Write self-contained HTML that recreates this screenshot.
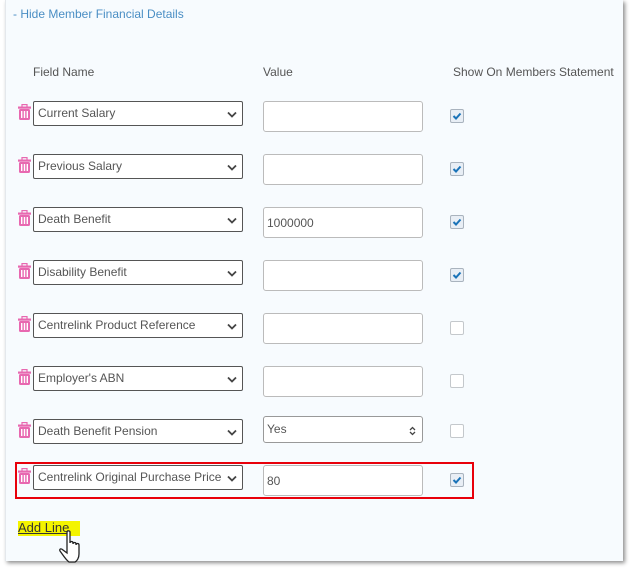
<!DOCTYPE html>
<html><head><style>
body{margin:0;width:631px;height:570px;background:#fff;font-family:"Liberation Sans",sans-serif;position:relative;overflow:hidden}
.panel{position:absolute;left:5px;top:0;width:617px;height:561px;background:#f7fbfe;box-shadow:2px 2px 4px rgba(0,0,0,.45);border-left:1px solid #e4e8ec}
.a{position:absolute}
.hide{left:13px;top:7px;font-size:12px;color:#4a8ec4}
.h{font-size:12px;color:#555;top:65px}
.sel{position:absolute;left:33px;height:23px;border:1px solid #555;border-radius:2px;background:#fff;font-size:12px;color:#555;line-height:23px;padding-left:4px;box-sizing:content-box;width:204px}
.sel svg{position:absolute;right:5px;top:9px}
.inp{position:absolute;left:263px;height:31px;border:1px solid #bbb;border-radius:3px;background:#fff;font-size:12px;color:#555;line-height:31px;padding-left:3px;box-sizing:border-box;width:160px}
.cb{position:absolute;left:450px;width:12px;height:12px;border:1px solid #c4c8cc;border-radius:2px;background:#fff}
.cb.on{background:#e8eef5;border-color:#a9b3be}
.tr{position:absolute;left:18px}
</style></head><body>
<div class="panel"></div>
<div class="a hide">- Hide Member Financial Details</div>
<div class="a h" style="left:33px">Field Name</div>
<div class="a h" style="left:263px">Value</div>
<div class="a h" style="left:453px">Show On Members Statement</div>

<svg width="0" height="0" style="position:absolute"><defs>
<symbol id="t" viewBox="0 0 13 16"><rect x="0" y="2.5" width="13" height="2.2" fill="#e868b0"/><rect x="4" y="0.6" width="5" height="2.5" fill="none" stroke="#e868b0" stroke-width="1.2"/><rect x="1" y="5" width="11" height="11" rx="1.5" fill="#e868b0"/><rect x="3" y="7" width="1.4" height="7" fill="#fff"/><rect x="5.8" y="7" width="1.4" height="7" fill="#fff"/><rect x="8.6" y="7" width="1.4" height="7" fill="#fff"/></symbol>
<symbol id="c" viewBox="0 0 10 7"><path d="M1 1.5 L5 5.5 L9 1.5" fill="none" stroke="#444" stroke-width="1.8"/></symbol>
<symbol id="k" viewBox="0 0 10 8"><path d="M1.5 4 L4 6.5 L8.5 1.5" fill="none" stroke="#1a73b8" stroke-width="2"/></symbol>
</defs></svg>

<svg class="tr" style="top:104px" width="13" height="16"><use href="#t"/></svg>
<div class="sel" style="top:101px">Current Salary<svg width="10" height="7"><use href="#c"/></svg></div>
<div class="inp" style="top:101px"></div>
<div class="cb on" style="top:109px"><svg width="10" height="8" style="position:absolute;left:1px;top:2px"><use href="#k"/></svg></div>

<svg class="tr" style="top:157px" width="13" height="16"><use href="#t"/></svg>
<div class="sel" style="top:154px">Previous Salary<svg width="10" height="7"><use href="#c"/></svg></div>
<div class="inp" style="top:154px"></div>
<div class="cb on" style="top:162px"><svg width="10" height="8" style="position:absolute;left:1px;top:2px"><use href="#k"/></svg></div>

<svg class="tr" style="top:210px" width="13" height="16"><use href="#t"/></svg>
<div class="sel" style="top:207px">Death Benefit<svg width="10" height="7"><use href="#c"/></svg></div>
<div class="inp" style="top:207px;line-height:30px">1000000</div>
<div class="cb on" style="top:215px"><svg width="10" height="8" style="position:absolute;left:1px;top:2px"><use href="#k"/></svg></div>

<svg class="tr" style="top:263px" width="13" height="16"><use href="#t"/></svg>
<div class="sel" style="top:260px">Disability Benefit<svg width="10" height="7"><use href="#c"/></svg></div>
<div class="inp" style="top:260px"></div>
<div class="cb on" style="top:268px"><svg width="10" height="8" style="position:absolute;left:1px;top:2px"><use href="#k"/></svg></div>

<svg class="tr" style="top:316px" width="13" height="16"><use href="#t"/></svg>
<div class="sel" style="top:313px">Centrelink Product Reference<svg width="10" height="7"><use href="#c"/></svg></div>
<div class="inp" style="top:313px"></div>
<div class="cb" style="top:321px"></div>

<svg class="tr" style="top:369px" width="13" height="16"><use href="#t"/></svg>
<div class="sel" style="top:366px">Employer's ABN<svg width="10" height="7"><use href="#c"/></svg></div>
<div class="inp" style="top:366px"></div>
<div class="cb" style="top:374px"></div>

<svg class="tr" style="top:422px" width="13" height="16"><use href="#t"/></svg>
<div class="sel" style="top:419px">Death Benefit Pension<svg width="10" height="7"><use href="#c"/></svg></div>
<div class="inp" style="top:416px;height:27px;line-height:24px;border-color:#999">Yes<svg style="position:absolute;right:6px;top:9px" width="7" height="10" viewBox="0 0 7 10"><path d="M1 4 L3.5 1.5 L6 4 M1 6 L3.5 8.5 L6 6" fill="none" stroke="#444" stroke-width="1.3"/></svg></div>
<div class="cb" style="top:424px"></div>

<div class="a" style="left:15px;top:462px;width:455px;height:33px;border:2px solid #e8000b"></div>
<svg class="tr" style="top:468px" width="13" height="16"><use href="#t"/></svg>
<div class="sel" style="top:465px">Centrelink Original Purchase Price<svg width="10" height="7"><use href="#c"/></svg></div>
<div class="inp" style="top:465px;line-height:30px">80</div>
<div class="cb on" style="top:473px"><svg width="10" height="8" style="position:absolute;left:1px;top:2px"><use href="#k"/></svg></div>

<div class="a" style="left:18px;top:521px;width:62px;height:15px;background:#f4f400"></div>
<div class="a" style="left:18px;top:520px;font-size:13px;color:#333;text-decoration:underline">Add Line</div>
<svg class="a" style="left:58px;top:530px" width="28" height="34" viewBox="0 0 28 34"><path d="M9 2 C9 0.5 12 0.5 12 2 L12 13 C12 11 15 11 15 13 L15 14 C15 12 18 12 18 14 L18 15 C18 13 21 13 21 15 L21 24 C21 28 19 31 17 32 L11 32 C8 30 5 25 2 21 C1 19 3 18 5 20 L9 23 Z" fill="#fff" stroke="#222" stroke-width="1.3"/></svg>
</body></html>
